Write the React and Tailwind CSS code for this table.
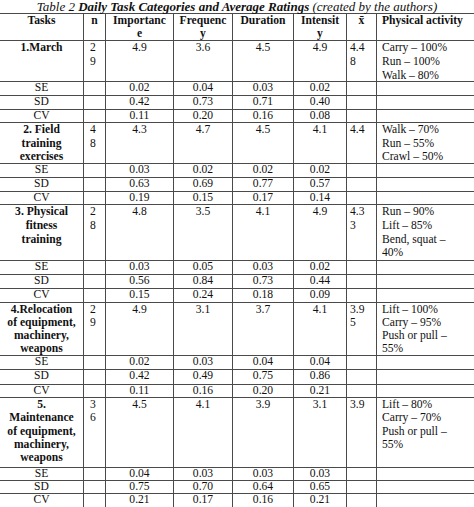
import React from 'react';

const cols = 'grid grid-cols-[84px_22px_68px_59px_61px_53px_30px_97px]';

const groups = [
  {
    task: ['1.March'],
    n: ['2', '9'],
    vals: ['4.9', '3.6', '4.5', '4.9'],
    mean: ['4.4', '8'],
    activity: ['Carry – 100%', 'Run – 100%', 'Walk – 80%'],
    h: 'h-[41px] leading-[13.8px]',
    stats: [
      ['SE', '0.02', '0.04', '0.03', '0.02', 'h-[14px]'],
      ['SD', '0.42', '0.73', '0.71', '0.40', 'h-[14px]'],
      ['CV', '0.11', '0.20', '0.16', '0.08', 'h-[13px]'],
    ],
  },
  {
    task: ['2. Field', 'training', 'exercises'],
    n: ['4', '8'],
    vals: ['4.3', '4.7', '4.5', '4.1'],
    mean: ['4.4'],
    activity: ['Walk – 70%', 'Run – 55%', 'Crawl – 50%'],
    h: 'h-[41px] leading-[13.5px]',
    stats: [
      ['SE', '0.03', '0.02', '0.02', '0.02', 'h-[14px]'],
      ['SD', '0.63', '0.69', '0.77', '0.57', 'h-[14px]'],
      ['CV', '0.19', '0.15', '0.17', '0.14', 'h-[13px]'],
    ],
  },
  {
    task: ['3. Physical', 'fitness', 'training'],
    n: ['2', '8'],
    vals: ['4.8', '3.5', '4.1', '4.9'],
    mean: ['4.3', '3'],
    activity: ['Run – 90%', 'Lift – 85%', 'Bend, squat –', '40%'],
    h: 'h-[56px] leading-[13.8px]',
    stats: [
      ['SE', '0.03', '0.05', '0.03', '0.02', 'h-[14px]'],
      ['SD', '0.56', '0.84', '0.73', '0.44', 'h-[14px]'],
      ['CV', '0.15', '0.24', '0.18', '0.09', 'h-[14px]'],
    ],
  },
  {
    task: ['4.Relocation', 'of equipment,', 'machinery,', 'weapons'],
    n: ['2', '9'],
    vals: ['4.9', '3.1', '3.7', '4.1'],
    mean: ['3.9', '5'],
    activity: ['Lift – 100%', 'Carry – 95%', 'Push or pull –', '55%'],
    h: 'h-[53px] leading-[13px]',
    stats: [
      ['SE', '0.02', '0.03', '0.04', '0.04', 'h-[14px]'],
      ['SD', '0.42', '0.49', '0.75', '0.86', 'h-[15px]'],
      ['CV', '0.11', '0.16', '0.20', '0.21', 'h-[13px]'],
    ],
  },
  {
    task: ['5.', 'Maintenance', 'of equipment,', 'machinery,', 'weapons'],
    n: ['3', '6'],
    vals: ['4.5', '4.1', '3.9', '3.1'],
    mean: ['3.9'],
    activity: ['Lift – 80%', 'Carry – 70%', 'Push or pull –', '55%'],
    h: 'h-[70px] leading-[13.3px]',
    stats: [
      ['SE', '0.04', '0.03', '0.03', '0.03', 'h-[13px]'],
      ['SD', '0.75', '0.70', '0.64', '0.65', 'h-[13px]'],
      ['CV', '0.21', '0.17', '0.16', '0.21', 'h-[14px]'],
    ],
  },
];

const Lines = ({ items }) => items.map((t, i) => <div key={i}>{t}</div>);

const cell = 'border-r border-[#4a4a4a] overflow-visible';

const App = () => {
  return (
    <div
      className="w-[474px] h-[507px] overflow-hidden bg-white text-[#111]"
      style={{ fontFamily: '"Liberation Serif", "Times New Roman", serif' }}
    >
      {/* Caption */}
      <div className="h-[13px] text-center text-[13px] leading-[13px] italic whitespace-nowrap">
        Table 2 <b>Daily Task Categories and Average Ratings</b> (created by the authors)
      </div>

      <div className="border-t border-[#4a4a4a] text-[11.6px]">
        {/* Header */}
        <div className={`${cols} h-[27px] border-b border-[#4a4a4a] font-bold leading-[13px]`}>
          <div className={`${cell} text-center`}>Tasks</div>
          <div className={`${cell} text-center`}>n</div>
          <div className={`${cell} text-center`}>Importanc<br />e</div>
          <div className={`${cell} text-center`}>Frequenc<br />y</div>
          <div className={`${cell} text-center`}>Duration</div>
          <div className={`${cell} text-center`}>Intensit<br />y</div>
          <div className={`${cell} text-center`}>x̄</div>
          <div className="pl-[5px]">Physical activity</div>
        </div>

        {groups.map((g, gi) => (
          <React.Fragment key={gi}>
            <div className={`${cols} ${g.h} border-b border-[#4a4a4a]`}>
              <div className={`${cell} text-center font-bold`}>
                <Lines items={g.task} />
              </div>
              <div className={`${cell} pl-[6px]`}>
                <Lines items={g.n} />
              </div>
              {g.vals.map((v, vi) => (
                <div key={vi} className={`${cell} text-center`}>{v}</div>
              ))}
              <div className={`${cell} pl-[3px]`}>
                <Lines items={g.mean} />
              </div>
              <div className="pl-[5px] whitespace-nowrap">
                <Lines items={g.activity} />
              </div>
            </div>
            {g.stats.map((s, si) => (
              <div key={si} className={`${cols} ${s[5]} border-b border-[#4a4a4a] leading-[12.5px]`}>
                <div className={`${cell} text-center`}>{s[0]}</div>
                <div className={cell}></div>
                <div className={`${cell} text-center`}>{s[1]}</div>
                <div className={`${cell} text-center`}>{s[2]}</div>
                <div className={`${cell} text-center`}>{s[3]}</div>
                <div className={`${cell} text-center`}>{s[4]}</div>
                <div className={cell}></div>
                <div></div>
              </div>
            ))}
          </React.Fragment>
        ))}
      </div>
    </div>
  );
};

export default App;
